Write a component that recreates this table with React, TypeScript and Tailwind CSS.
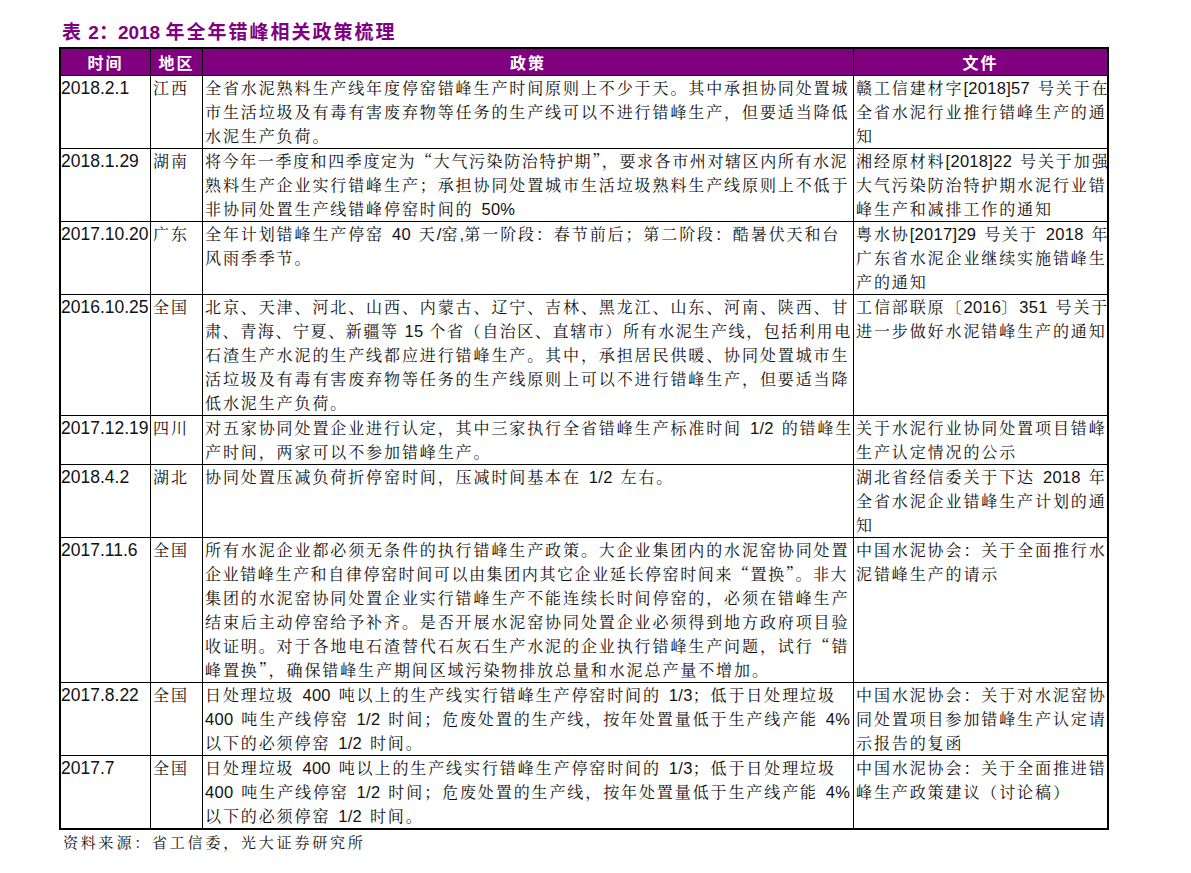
type Row = {
  date: string
  region: string
  policy: string[]
  file: string[]
}

// a leading "~" marks a line that has to be set a bit tighter to stay in its cell
const rows: Row[] = [
  {
    date: '2018.2.1',
    region: '江西',
    policy: [
      '全省水泥熟料生产线年度停窑错峰生产时间原则上不少于天。其中承担协同处置城',
      '市生活垃圾及有毒有害废弃物等任务的生产线可以不进行错峰生产，但要适当降低',
      '水泥生产负荷。',
    ],
    file: ['赣工信建材字[2018]57 号关于在', '全省水泥行业推行错峰生产的通', '知'],
  },
  {
    date: '2018.1.29',
    region: '湖南',
    policy: [
      '~将今年一季度和四季度定为“大气污染防治特护期”，要求各市州对辖区内所有水泥',
      '熟料生产企业实行错峰生产；承担协同处置城市生活垃圾熟料生产线原则上不低于',
      '非协同处置生产线错峰停窑时间的 50%',
    ],
    file: ['湘经原材料[2018]22 号关于加强', '大气污染防治特护期水泥行业错', '峰生产和减排工作的通知'],
  },
  {
    date: '2017.10.20',
    region: '广东',
    policy: ['全年计划错峰生产停窑 40 天/窑,第一阶段：春节前后；第二阶段：酷暑伏天和台', '风雨季季节。'],
    file: ['粤水协[2017]29 号关于 2018 年', '广东省水泥企业继续实施错峰生', '产的通知'],
  },
  {
    date: '2016.10.25',
    region: '全国',
    policy: [
      '北京、天津、河北、山西、内蒙古、辽宁、吉林、黑龙江、山东、河南、陕西、甘',
      '~肃、青海、宁夏、新疆等 15 个省（自治区、直辖市）所有水泥生产线，包括利用电',
      '石渣生产水泥的生产线都应进行错峰生产。其中，承担居民供暖、协同处置城市生',
      '活垃圾及有毒有害废弃物等任务的生产线原则上可以不进行错峰生产，但要适当降',
      '低水泥生产负荷。',
    ],
    file: ['工信部联原〔2016〕351 号关于', '进一步做好水泥错峰生产的通知'],
  },
  {
    date: '2017.12.19',
    region: '四川',
    policy: [
      '对五家协同处置企业进行认定，其中三家执行全省错峰生产标准时间 1/2 的错峰生',
      '产时间，两家可以不参加错峰生产。',
    ],
    file: ['关于水泥行业协同处置项目错峰', '生产认定情况的公示'],
  },
  {
    date: '2018.4.2',
    region: '湖北',
    policy: ['协同处置压减负荷折停窑时间，压减时间基本在 1/2 左右。'],
    file: ['湖北省经信委关于下达 2018 年', '全省水泥企业错峰生产计划的通', '知'],
  },
  {
    date: '2017.11.6',
    region: '全国',
    policy: [
      '所有水泥企业都必须无条件的执行错峰生产政策。大企业集团内的水泥窑协同处置',
      '~企业错峰生产和自律停窑时间可以由集团内其它企业延长停窑时间来“置换”。非大',
      '集团的水泥窑协同处置企业实行错峰生产不能连续长时间停窑的，必须在错峰生产',
      '结束后主动停窑给予补齐。是否开展水泥窑协同处置企业必须得到地方政府项目验',
      '收证明。对于各地电石渣替代石灰石生产水泥的企业执行错峰生产问题，试行“错',
      '峰置换”，确保错峰生产期间区域污染物排放总量和水泥总产量不增加。',
    ],
    file: ['中国水泥协会：关于全面推行水', '泥错峰生产的请示'],
  },
  {
    date: '2017.8.22',
    region: '全国',
    policy: [
      '日处理垃圾 400 吨以上的生产线实行错峰生产停窑时间的 1/3；低于日处理垃圾',
      '400 吨生产线停窑 1/2 时间；危废处置的生产线，按年处置量低于生产线产能 4%',
      '以下的必须停窑 1/2 时间。',
    ],
    file: ['中国水泥协会：关于对水泥窑协', '同处置项目参加错峰生产认定请', '示报告的复函'],
  },
  {
    date: '2017.7',
    region: '全国',
    policy: [
      '日处理垃圾 400 吨以上的生产线实行错峰生产停窑时间的 1/3；低于日处理垃圾',
      '400 吨生产线停窑 1/2 时间；危废处置的生产线，按年处置量低于生产线产能 4%',
      '以下的必须停窑 1/2 时间。',
    ],
    file: ['中国水泥协会：关于全面推进错', '峰生产政策建议（讨论稿）'],
  },
]

// latin bits in Arial-like face, the rest in the CJK face with wide tracking
const Rich = ({ text, tight }: { text: string; tight?: boolean }) => {
  const parts = text.split(/([\x20-\x7E]+)/).filter((p) => p !== '')
  return (
    <>
      {parts.map((p, i) =>
        /^[\x20-\x7E]+$/.test(p) ? (
          <span
            key={i}
            className={`font-['Liberation_Sans',sans-serif] text-[16.5px] tracking-[0.3px] whitespace-pre ${
              tight ? '[word-spacing:1px]' : '[word-spacing:3px]'
            }`}
          >
            {p}
          </span>
        ) : (
          <span
            key={i}
            className={`font-['Noto_Serif_CJK_SC','Noto_Sans_CJK_SC',sans-serif] text-[16px] ${
              tight ? 'tracking-[1.6px]' : 'tracking-[1.9px]'
            }`}
          >
            {p}
          </span>
        )
      )}
    </>
  )
}

const Lines = ({ lines }: { lines: string[] }) => (
  <>
    {lines.map((l, i) => {
      const tight = l.startsWith('~')
      return (
        <div key={i} className="h-[24px] leading-[24px] whitespace-nowrap">
          <Rich text={tight ? l.slice(1) : l} tight={tight} />
        </div>
      )
    })}
  </>
)

const cols = 'grid grid-cols-[90px_52px_651px_253px]'

export default function App() {
  return (
    <div className="min-h-[873px] w-[1191px] bg-white pt-[19px] pl-[59px] text-[#111]">
      <div className="h-[28px] pl-[3px] leading-[24px] font-bold text-[#800080] whitespace-pre">
        <span className="font-['Noto_Sans_CJK_SC',sans-serif] text-[19px] tracking-[2px]">表</span>
        <span className="font-['Liberation_Sans',sans-serif] text-[19px]"> 2</span>
        <span className="font-['Noto_Sans_CJK_SC',sans-serif] text-[19px]">：</span>
        <span className="font-['Liberation_Sans',sans-serif] text-[19px]">2018 </span>
        <span className="font-['Noto_Sans_CJK_SC',sans-serif] text-[19px] tracking-[2px]">年全年错峰相关政策梳理</span>
      </div>

      <div className="w-[1050px] border-2 border-black">
        <div className={`${cols} h-[27px] border-b border-black bg-[#800080] text-white font-bold`}>
          {['时间', '地区', '政策', '文件'].map((h, i) => (
            <div
              key={h}
              className={`flex items-center justify-center font-['Noto_Sans_CJK_SC',sans-serif] text-[16px] tracking-[2px] leading-[26px] ${
                i < 3 ? 'border-r border-black' : ''
              }`}
            >
              {h}
            </div>
          ))}
        </div>

        {rows.map((r, idx) => (
          <div key={idx} className={`${cols} ${idx < rows.length - 1 ? 'border-b border-black' : ''}`}>
            <div className="border-r border-black leading-[24px] font-['Liberation_Sans',sans-serif] text-[17.5px] whitespace-nowrap">
              {r.date}
            </div>
            <div className="border-r border-black pl-[2px] leading-[24px] font-['Noto_Serif_CJK_SC','Noto_Sans_CJK_SC',sans-serif] text-[16px] tracking-[2px]">
              {r.region}
            </div>
            <div className="border-r border-black pl-[2px]">
              <Lines lines={r.policy} />
            </div>
            <div className="pl-[2px]">
              <Lines lines={r.file} />
            </div>
          </div>
        ))}
      </div>

      <div className="pl-[4px] leading-[24px] font-['Noto_Serif_CJK_SC','Noto_Sans_CJK_SC',sans-serif] text-[15px] tracking-[2.8px] text-[#111]">
        资料来源：省工信委，光大证券研究所
      </div>
    </div>
  )
}
